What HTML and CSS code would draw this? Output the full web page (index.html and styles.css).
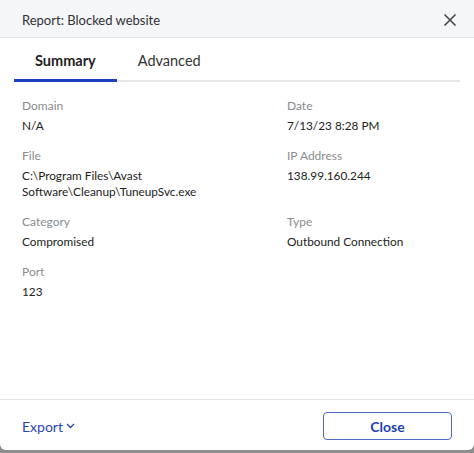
FILE: index.html
```html
<!DOCTYPE html>
<html>
<head>
<meta charset="utf-8">
<link rel="stylesheet" href="styles.css">
</head>
<body>
<div class="window">
  <div class="titlebar">
    <span class="title">Report: Blocked website</span>
    <svg class="x" width="14" height="14" viewBox="0 0 14 14"><path d="M1.5 1.5 L12.5 12.5 M12.5 1.5 L1.5 12.5" stroke="#45474d" stroke-width="1.6" fill="none"/></svg>
  </div>
  <div class="tabs">
    <div class="tab active">Summary</div>
    <div class="tab">Advanced</div>
  </div>
  <div class="content">
    <div class="field"><div class="label">Domain</div><div class="value">N/A</div></div>
    <div class="field"><div class="label">Date</div><div class="value">7/13/23 8:28 PM</div></div>
    <div class="field"><div class="label">File</div><div class="value">C:\Program Files\Avast<br>Software\Cleanup\TuneupSvc.exe</div></div>
    <div class="field"><div class="label">IP Address</div><div class="value">138.99.160.244</div></div>
    <div class="field"><div class="label">Category</div><div class="value">Compromised</div></div>
    <div class="field"><div class="label">Type</div><div class="value">Outbound Connection</div></div>
    <div class="field"><div class="label">Port</div><div class="value">123</div></div>
  </div>
  <div class="footer">
    <span class="export">Export <svg width="9" height="6" viewBox="0 0 9 6"><path d="M1 1 L4.5 4.5 L8 1" stroke="#2b45b5" stroke-width="1.3" fill="none"/></svg></span>
    <button class="close">Close</button>
  </div>
</div>
</body>
</html>
```
FILE: styles.css
```css
html, body { margin: 0; padding: 0; }
body {
  width: 474px;
  height: 453px;
  background: #8e8e8e;
  font-family: Lato, "Noto Sans", sans-serif;
  overflow: hidden;
}
.window {
  height: 450px;
  background: #fff;
  border-radius: 0 0 6px 6px;
  display: flex;
  flex-direction: column;
}
.titlebar {
  height: 38px;
  box-sizing: border-box;
  background: #f5f6f8;
  border-bottom: 1px solid #e3e5e9;
  display: flex;
  align-items: center;
  justify-content: space-between;
  padding: 3px 17px 0 22px;
}
.title {
  font-family: Lato, sans-serif;
  font-size: 13px;
  color: #2f3136;
}
.x { display: block; }
.tabs {
  margin: 0 14px;
  height: 44px;
  display: flex;
  align-items: flex-end;
  border-bottom: 2px solid #e6e7e9;
  box-sizing: border-box;
  width: 446px;
}
.tab {
  font-size: 14.5px;
  color: #333;
  padding: 0 21px 10px;
  position: relative;
  top: 2px;
  border-bottom: 3px solid transparent;
}
.tab.active {
  font-weight: 700;
  color: #222;
  border-bottom-color: #1a3fc2;
}
.content {
  flex: 1;
  display: grid;
  grid-template-columns: 265px 1fr;
  align-content: start;
  row-gap: 14px;
  padding: 16px 22px 0;
}
.label {
  font-size: 12px;
  color: #8a8b8f;
  line-height: 16px;
  margin-bottom: 4px;
}
.value {
  font-size: 11.8px;
  color: #222;
  line-height: 16px;
}
.footer {
  border-top: 1px solid #e4e5e8;
  height: 48px;
  display: flex;
  align-items: center;
  justify-content: space-between;
  padding: 2px 22px 0 22px;
}
.export {
  font-size: 14px;
  color: #2b45b5;
  display: flex;
  align-items: center;
  gap: 3px;
}
.close {
  width: 129px;
  height: 28px;
  border: 1px solid #5068c8;
  border-radius: 4px;
  background: #fff;
  color: #2140b0;
  font-family: Lato, sans-serif;
  font-weight: 700;
  font-size: 14px;
  margin-right: 0;
}
```
